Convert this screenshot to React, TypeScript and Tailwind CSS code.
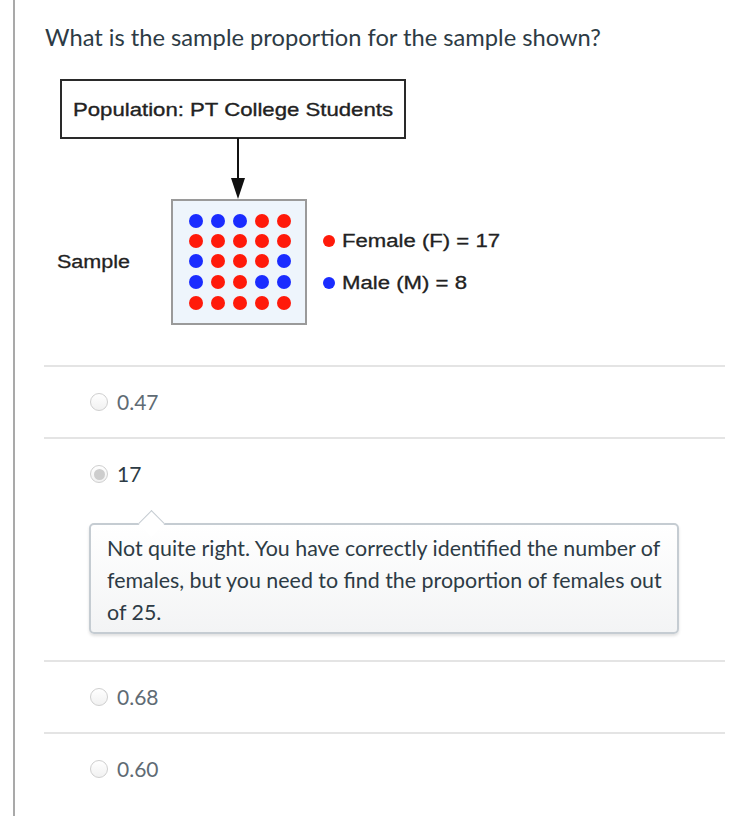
import React from 'react';

const grid = [
  ['b', 'b', 'b', 'r', 'r'],
  ['r', 'r', 'r', 'r', 'r'],
  ['b', 'r', 'r', 'r', 'b'],
  ['b', 'r', 'r', 'b', 'b'],
  ['r', 'r', 'r', 'r', 'r'],
];
const xs = [196, 218, 240, 262, 284];
const ys = [221, 241, 261, 282, 303];

function Diagram() {
  const font = '"Liberation Sans", Arial, sans-serif';
  return (
    <svg width="460" height="255" viewBox="50 75 460 255" className="block">
      <rect x="61" y="80" width="344" height="58" fill="#fff" stroke="#2a2a2a" strokeWidth="2" />
      <text x="73" y="116" fontFamily={font} fontSize="19" fill="#222" stroke="#222" strokeWidth="0.35" textLength="320" lengthAdjust="spacingAndGlyphs">
        Population: PT College Students
      </text>
      <line x1="238" y1="138" x2="238" y2="182" stroke="#111" strokeWidth="2" />
      <polygon points="231,178 245,178 238,199" fill="#111" />
      <rect x="172" y="200" width="134" height="124" fill="#eef5fc" stroke="#9a9a9a" strokeWidth="2" />
      {grid.map((row, i) =>
        row.map((c, j) => (
          <circle key={`${i}-${j}`} cx={xs[j]} cy={ys[i]} r="7" fill={c === 'r' ? '#ff1a0a' : '#1a2cff'} />
        ))
      )}
      <text x="57" y="268" fontFamily={font} fontSize="18" fill="#222" stroke="#222" strokeWidth="0.3" textLength="73" lengthAdjust="spacingAndGlyphs">
        Sample
      </text>
      <circle cx="329" cy="241" r="6" fill="#ff1a0a" />
      <text x="342" y="247" fontFamily={font} fontSize="18" fill="#222" stroke="#222" strokeWidth="0.3" textLength="158" lengthAdjust="spacingAndGlyphs">
        Female (F) = 17
      </text>
      <circle cx="329" cy="283" r="6" fill="#1a2cff" />
      <text x="342" y="289" fontFamily={font} fontSize="18" fill="#222" stroke="#222" strokeWidth="0.3" textLength="125" lengthAdjust="spacingAndGlyphs">
        Male (M) = 8
      </text>
    </svg>
  );
}

function Radio({ checked }: { checked?: boolean }) {
  return (
    <span className="w-[18px] h-[18px] rounded-full border border-[#cfcfcf] bg-gradient-to-b from-white to-[#f1f1f1] flex items-center justify-center">
      {checked && <span className="w-[11px] h-[11px] rounded-full bg-[#cdcdcd]" />}
    </span>
  );
}

function Option({ label, checked }: { label: string; checked?: boolean }) {
  return (
    <div className="h-[70px] flex items-center pl-[46px] gap-[9px]">
      <Radio checked={checked} />
      <span className={`text-[21px] ${checked ? 'text-[#2d3b45]' : 'text-[#5f6b74]'}`}>{label}</span>
    </div>
  );
}

const Divider = () => <div className="h-[2px] bg-[#e4e4e4]" />;

export default function App() {
  return (
    <div className="min-h-[816px] bg-white flex" style={{ fontFamily: 'Lato, "Open Sans", sans-serif' }}>
      <div className="w-[13px] shrink-0" />
      <div className="w-[2px] shrink-0 bg-[#a9a9a9]" />
      <div className="w-[681px] ml-[29px] flex flex-col">
        <h1 className="pt-[22px] text-[23.7px] leading-[30px] text-[#2d3b45] pl-[1px]">
          What is the sample proportion for the sample shown?
        </h1>
        <div className="mt-[23px] ml-[6px] h-[290px]">
          <Diagram />
        </div>
        <Divider />
        <Option label="0.47" />
        <Divider />
        <Option label="17" checked />
        <div className="relative ml-[45px] mt-[14px] mb-[26px] w-[590px] h-[111px] rounded-[5px] border-2 border-[#c5ccd2] bg-gradient-to-b from-white to-[#f3f4f5] shadow-[0_2px_3px_rgba(0,0,0,0.12)] pl-[16px] pr-[10px] pt-[7px] text-[21.4px] leading-[32px] text-[#2d3b45]">
          <span className="absolute left-[51px] top-[-11px] w-[19px] h-[19px] rotate-45 bg-white border-t border-l border-[#c5ccd2]" />
          <p className="relative">
            Not quite right. You have correctly identified the number of females, but you need to find the proportion of females out of 25.
          </p>
        </div>
        <Divider />
        <Option label="0.68" />
        <Divider />
        <Option label="0.60" />
      </div>
    </div>
  );
}
